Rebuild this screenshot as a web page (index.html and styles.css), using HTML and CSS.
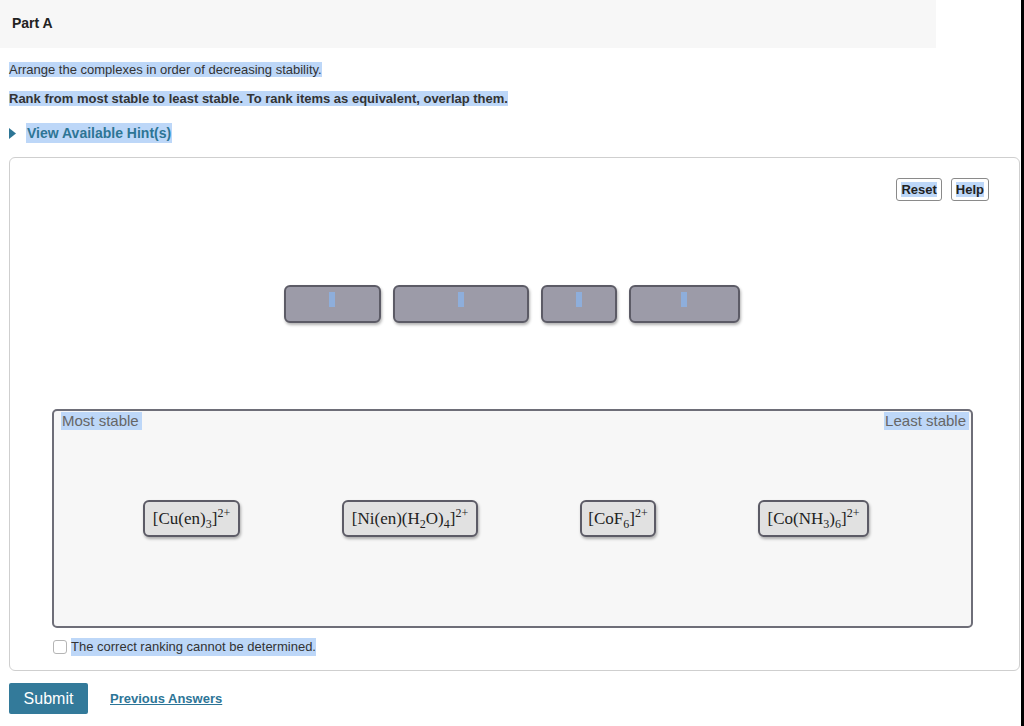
FILE: index.html
```html
<!DOCTYPE html>
<html>
<head>
<meta charset="utf-8">
<link rel="stylesheet" href="styles.css">
</head>
<body>
<div class="page">
  <div class="part-header">Part A</div>
  <p class="prompt"><span class="sel">Arrange the complexes in order of decreasing stability.</span></p>
  <p class="instr"><span class="sel">Rank from most stable to least stable. To rank items as equivalent, overlap them.</span></p>
  <div class="hint">
    <svg class="tri" width="7" height="11" viewBox="0 0 7 11"><polygon points="0,0 7,5.5 0,11" fill="#2d7595"/></svg>
    <span class="sel hint-text">View Available Hint(s)</span>
  </div>
  <div class="panel">
    <div class="tools">
      <button class="tool"><span class="sel">Reset</span></button>
      <button class="tool"><span class="sel">Help</span></button>
    </div>
    <div class="slots">
      <div class="slot w1"><span class="caret"></span></div>
      <div class="slot w2"><span class="caret"></span></div>
      <div class="slot w3"><span class="caret"></span></div>
      <div class="slot w4"><span class="caret"></span></div>
    </div>
    <div class="rank">
      <div class="rank-labels">
        <span class="sel lbl">Most stable</span>
        <span class="sel lbl">Least stable</span>
      </div>
      <div class="items">
        <div class="item w1"><span class="f">[Cu(en)<sub>3</sub>]<sup>2+</sup></span></div>
        <div class="item w2"><span class="f">[Ni(en)(H<sub>2</sub>O)<sub>4</sub>]<sup>2+</sup></span></div>
        <div class="item w3"><span class="f">[CoF<sub>6</sub>]<sup>2+</sup></span></div>
        <div class="item w4"><span class="f">[Co(NH<sub>3</sub>)<sub>6</sub>]<sup>2+</sup></span></div>
      </div>
    </div>
    <label class="check-row">
      <span class="box"></span>
      <span class="sel">The correct ranking cannot be determined.</span>
    </label>
  </div>
  <div class="actions">
    <button class="submit">Submit</button>
    <a class="prev" href="#">Previous Answers</a>
  </div>
</div>
</body>
</html>
```
FILE: styles.css
```css
html { background: #000; }
body {
  margin: 0;
  width: 1021px;
  min-height: 726px;
  background: #fff;
  font-family: "Liberation Sans", Arial, sans-serif;
  color: #333;
}
.page { padding: 0; }
.sel { background: #bdd7f8; }
.part-header {
  width: 924px;
  height: 48px;
  background: #f7f7f7;
  padding-left: 12px;
  font-size: 14px;
  font-weight: bold;
  line-height: 46px;
  color: #222;
}
.prompt {
  margin: 13px 0 0 9px;
  font-size: 13px;
  line-height: 17px;
}
.instr {
  margin: 12px 0 0 9px;
  font-size: 13px;
  font-weight: bold;
  line-height: 17px;
}
.hint {
  margin: 16px 0 0 9px;
  display: flex;
  align-items: center;
  gap: 10px;
  height: 20px;
}
.tri { display: block; }
.hint-text {
  font-size: 14px;
  font-weight: bold;
  color: #2d7595;
  line-height: 20px;
  padding: 0 1px;
}
.panel {
  margin: 14px 0 0 9px;
  width: 1011px;
  border: 1px solid #cfcfcf;
  border-radius: 6px;
  box-sizing: border-box;
  height: 514px;
}
.tools {
  display: flex;
  justify-content: flex-end;
  gap: 9px;
  margin: 20px 30px 0 0;
}
.tool {
  font-family: "Liberation Sans", Arial, sans-serif;
  font-size: 13px;
  font-weight: bold;
  color: #222;
  background: #fff;
  border: 1px solid #8a8a8a;
  border-radius: 3px;
  padding: 3px 4px;
  height: 23px;
  line-height: 15px;
}
.slots {
  display: flex;
  justify-content: center;
  gap: 12px;
  margin-top: 84px;
  padding-right: 6px;
}
.slot {
  height: 38px;
  box-sizing: border-box;
  background: #9c9ba8;
  border: 2px solid #5c5b66;
  border-radius: 6px;
  box-shadow: 1px 2px 3px rgba(0,0,0,0.3);
  display: flex;
  justify-content: center;
  padding-top: 5px;
}
.w1 { width: 97px; }
.w2 { width: 136px; }
.w3 { width: 76px; }
.w4 { width: 111px; }
.caret {
  width: 6px;
  height: 15px;
  background: #8eaedb;
}
.rank {
  margin: 86px 0 0 42px;
  width: 921px;
  height: 219px;
  box-sizing: border-box;
  background: #f7f7f7;
  border: 2px solid #6e6e78;
  border-radius: 5px;
}
.rank-labels {
  display: flex;
  justify-content: space-between;
  padding: 1px 2px 0 7px;
}
.lbl {
  font-size: 15px;
  color: #666;
  line-height: 18px;
  padding: 0 3px 0 1px;
}
.items {
  display: flex;
  gap: 102px;
  padding-left: 89px;
  margin-top: 70px;
}
.item {
  height: 37px;
  box-sizing: border-box;
  background: #e1e1e1;
  border: 2px solid #5c5b66;
  border-radius: 6px;
  box-shadow: 1px 2px 3px rgba(0,0,0,0.3);
  font-family: "Liberation Serif", "DejaVu Serif", serif;
  font-size: 17px;
  color: #222;
  display: flex;
  align-items: center;
  justify-content: center;
  white-space: nowrap;
}
.f { line-height: 20px; }
.item sub { font-size: 12px; vertical-align: -4px; line-height: 0; }
.item sup { font-size: 12px; vertical-align: 7px; line-height: 0; }
.check-row {
  display: flex;
  align-items: center;
  gap: 4px;
  margin: 10px 0 0 43px;
  font-size: 13px;
  line-height: 18px;
}
.box {
  width: 12px;
  height: 12px;
  border: 1px solid #b5b5b5;
  border-radius: 3px;
  background: #fff;
}
.actions {
  display: flex;
  align-items: center;
  gap: 22px;
  margin: 12px 0 0 9px;
}
.submit {
  width: 79px;
  height: 31px;
  background: #337a9a;
  color: #fff;
  border: none;
  border-radius: 2px;
  font-family: "Liberation Sans", Arial, sans-serif;
  font-size: 16px;
}
.prev {
  font-size: 13px;
  font-weight: bold;
  color: #2d7597;
  text-decoration: underline;
}
```
